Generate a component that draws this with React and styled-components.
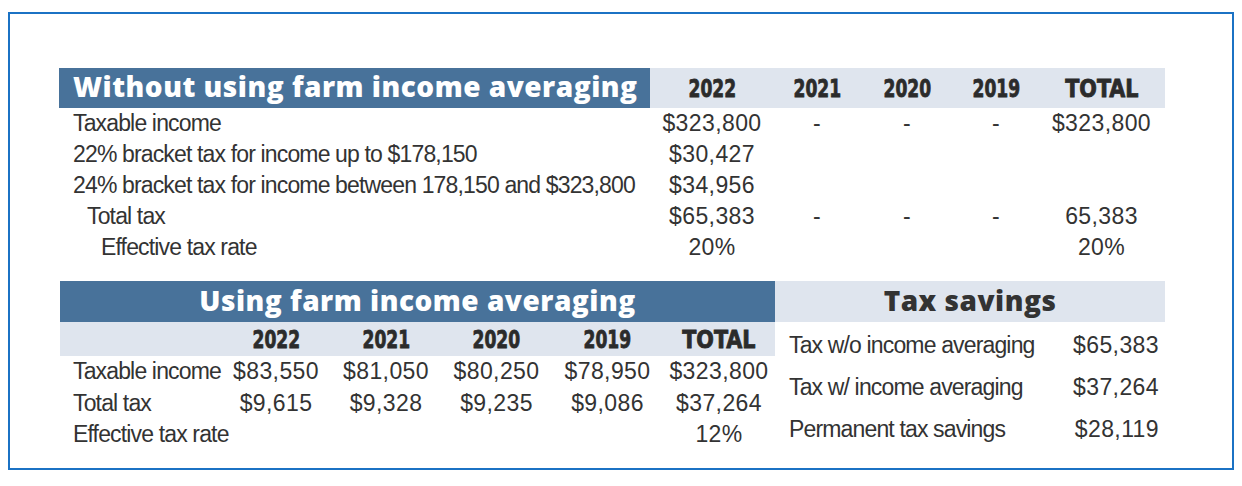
import React from "react";
import styled, { createGlobalStyle } from "styled-components";

const GlobalStyle = createGlobalStyle`
  body {
    margin: 0;
    background: #ffffff;
  }
`;

const Frame = styled.div`
  box-sizing: border-box;
  width: 1226px;
  height: 458px;
  margin: 12px 0 0 8px;
  border: 2px solid #1b72c4;
  padding: 54px 0 0 49px;
  font-family: "Liberation Sans", Arial, sans-serif;
  font-size: 23px;
  color: #333333;
`;

const Grid = styled.div`
  display: grid;
  grid-template-columns: ${(p) => p.$cols};
  width: ${(p) => p.$width}px;
`;

const TitleBar = styled.div`
  grid-column: ${(p) => p.$span || "auto"};
  box-sizing: border-box;
  height: ${(p) => p.$h}px;
  display: flex;
  align-items: center;
  justify-content: ${(p) => (p.$center ? "center" : "flex-start")};
  padding: 0 0 4px ${(p) => (p.$center ? 0 : 14)}px;
  background: ${(p) => (p.$light ? "#dfe5ee" : "#48729a")};
  color: ${(p) => (p.$light ? "#333333" : "#ffffff")};
  font-family: "Open Sans", "DejaVu Sans", sans-serif;
  font-weight: 800;
  font-size: 28px;
  letter-spacing: 0.5px;
  white-space: nowrap;
`;

const YearHead = styled.div`
  height: ${(p) => p.$h}px;
  display: flex;
  align-items: center;
  justify-content: center;
  background: #dfe5ee;
  font-family: "DejaVu Sans Condensed", "DejaVu Sans", sans-serif;
  font-weight: 700;
  font-size: 25px;
  color: #2b2b2b;
  -webkit-text-stroke: 0.8px #2b2b2b;
`;

const Squeeze = styled.span`
  display: inline-block;
  transform: scaleX(${(p) => p.$sx});
`;

const Cell = styled.div`
  height: ${(p) => p.$h || 31}px;
  line-height: ${(p) => p.$h || 31}px;
  padding-left: ${(p) => p.$indent || 0}px;
  padding-right: ${(p) => p.$pr || 0}px;
  text-align: ${(p) => p.$align || "center"};
  letter-spacing: ${(p) => (p.$label ? "-0.85px" : "0.4px")};
  white-space: nowrap;
`;

const Bottom = styled.div`
  display: flex;
  margin-top: 18px;
  margin-left: 1px;
`;

const Savings = styled.div`
  width: 390px;
`;

const SavingsRows = styled.div`
  display: grid;
  grid-template-columns: 1fr auto;
  margin-top: 2px;
`;

const topYears = ["2022", "2021", "2020", "2019", "TOTAL"];

const topRows = [
  { label: "Taxable income", indent: 14, vals: ["$323,800", "-", "-", "-", "$323,800"] },
  { label: "22% bracket tax for income up to $178,150", indent: 14, vals: ["$30,427", "", "", "", ""] },
  {
    label: "24% bracket tax for income between 178,150 and $323,800",
    indent: 14,
    vals: ["$34,956", "", "", "", ""],
  },
  { label: "Total tax", indent: 28, vals: ["$65,383", "-", "-", "-", "65,383"] },
  { label: "Effective tax rate", indent: 42, vals: ["20%", "", "", "", "20%"] },
];

const bottomRows = [
  { label: "Taxable income", vals: ["$83,550", "$81,050", "$80,250", "$78,950", "$323,800"] },
  { label: "Total tax", vals: ["$9,615", "$9,328", "$9,235", "$9,086", "$37,264"] },
  { label: "Effective tax rate", vals: ["", "", "", "", "12%"] },
];

const savings = [
  ["Tax w/o income averaging", "$65,383"],
  ["Tax w/ income averaging", "$37,264"],
  ["Permanent tax savings", "$28,119"],
];

const Year = ({ y, h }) => (
  <YearHead $h={h}>
    <Squeeze $sx={y === "TOTAL" ? 0.92 : 0.76}>{y}</Squeeze>
  </YearHead>
);

export default function App() {
  return (
    <>
      <GlobalStyle />
      <Frame>
        <Grid $cols="591px 124px 86px 94px 84px 127px" $width={1106}>
          <TitleBar $h={40}>Without using farm income averaging</TitleBar>
          {topYears.map((y) => (
            <Year key={y} y={y} h={40} />
          ))}
          {topRows.map((r) => (
            <React.Fragment key={r.label}>
              <Cell $label $align="left" $indent={r.indent}>
                {r.label}
              </Cell>
              {r.vals.map((v, i) => (
                <Cell key={i}>{v}</Cell>
              ))}
            </React.Fragment>
          ))}
        </Grid>

        <Bottom>
          <Grid $cols="161px 110px 110px 111px 111px 112px" $width={715}>
            <TitleBar $h={41} $span="1 / -1" $center>
              Using farm income averaging
            </TitleBar>
            <YearHead $h={34} />
            {topYears.map((y) => (
              <Year key={y} y={y} h={34} />
            ))}
            {bottomRows.map((r) => (
              <React.Fragment key={r.label}>
                <Cell $label $align="left" $indent={13}>
                  {r.label}
                </Cell>
                {r.vals.map((v, i) => (
                  <Cell key={i}>{v}</Cell>
                ))}
              </React.Fragment>
            ))}
          </Grid>

          <Savings>
            <TitleBar $h={41} $light $center>
              Tax savings
            </TitleBar>
            <SavingsRows>
              {savings.map(([l, v]) => (
                <React.Fragment key={l}>
                  <Cell $h={42} $label $align="left" $indent={14}>
                    {l}
                  </Cell>
                  <Cell $h={42} $align="right" $pr={6}>
                    {v}
                  </Cell>
                </React.Fragment>
              ))}
            </SavingsRows>
          </Savings>
        </Bottom>
      </Frame>
    </>
  );
}
